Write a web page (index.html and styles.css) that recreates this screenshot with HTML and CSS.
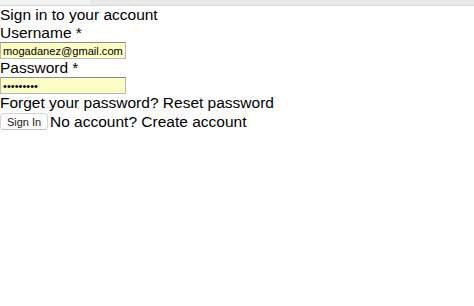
FILE: index.html
```html
<!DOCTYPE html>
<html>
<head>
<meta charset="utf-8">
<link rel="stylesheet" href="styles.css">
</head>
<body>
<div class="chrome"><div class="chrome-left"></div><div class="chrome-right"></div></div>
<form class="form">
  <div class="title">Sign in to your account</div>
  <div class="label">Username *</div>
  <input class="field" type="text" value="mogadanez@gmail.com">
  <div class="label">Password *</div>
  <input class="field" type="password" value="password1">
  <div class="line">Forget your password? Reset password</div>
  <div class="line actions"><button class="btn" type="button">Sign In</button><span>No account? Create account</span></div>
</form>
</body>
</html>
```
FILE: styles.css
```css
html, body {
  margin: 0;
  padding: 0;
  background: #fff;
}
body {
  font-family: "Liberation Sans", Arial, sans-serif;
  font-size: 15.5px;
  color: #000;
}
.chrome {
  display: flex;
  height: 5px;
  border-bottom: 1px solid #d6d6d6;
}
.chrome-left {
  width: 90px;
  background: #f3f3f3;
}
.chrome-right {
  flex: 1;
  background: #e9e9e9;
}
.form {
  display: flex;
  flex-direction: column;
  align-items: flex-start;
}
.title, .label, .line {
  line-height: 18px;
}
.field {
  box-sizing: border-box;
  width: 126px;
  height: 17px;
  margin: 0;
  padding: 0 0 0 2px;
  font-family: "Liberation Sans", Arial, sans-serif;
  font-size: 11.1px;
  background: #fdfdc6;
  border: 1px solid #b8b8b8;
  border-top-color: #8a8a8a;
  outline: none;
  color: #000;
}
.actions {
  display: flex;
  align-items: center;
  gap: 2px;
  height: 19px;
}
.btn {
  box-sizing: border-box;
  height: 17px;
  width: 48px;
  padding: 0;
  margin: 0;
  font-family: "Liberation Sans", Arial, sans-serif;
  font-size: 11px;
  background: #fff;
  border: 1px solid #d4d4d4;
  border-bottom-color: #c4c4c4;
  border-radius: 4px;
  color: #222;
}
```
